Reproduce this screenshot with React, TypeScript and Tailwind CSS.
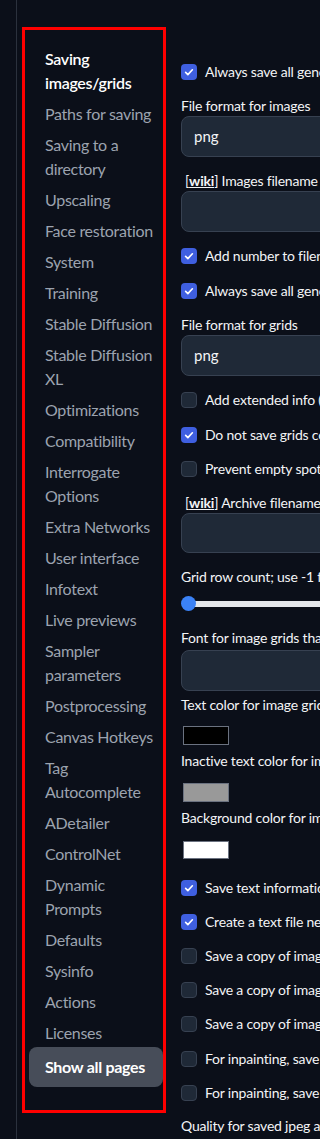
const pages = [
  "Saving images/grids",
  "Paths for saving",
  "Saving to a directory",
  "Upscaling",
  "Face restoration",
  "System",
  "Training",
  "Stable Diffusion",
  "Stable Diffusion XL",
  "Optimizations",
  "Compatibility",
  "Interrogate Options",
  "Extra Networks",
  "User interface",
  "Infotext",
  "Live previews",
  "Sampler parameters",
  "Postprocessing",
  "Canvas Hotkeys",
  "Tag Autocomplete",
  "ADetailer",
  "ControlNet",
  "Dynamic Prompts",
  "Defaults",
  "Sysinfo",
  "Actions",
  "Licenses",
];

function Check({ on, label, className }: { on: boolean; label: string; className: string }) {
  return (
    <div className={`flex h-5 items-center gap-2 whitespace-nowrap ${className}`}>
      {on ? (
        <span className="flex h-4 w-4 shrink-0 items-center justify-center rounded-[4px] bg-[#3f5fe0]">
          <svg viewBox="0 0 16 16" className="h-3 w-3" fill="none">
            <path d="M3.5 8.5l3 3 6-6.5" stroke="white" strokeWidth="2.2" strokeLinecap="round" strokeLinejoin="round" />
          </svg>
        </span>
      ) : (
        <span className="h-4 w-4 shrink-0 rounded-[4px] border border-[#374151] bg-[#1f2937]" />
      )}
      <span className="text-[14px] leading-5 tracking-[-0.2px] text-[#f3f4f6]">{label}</span>
    </div>
  );
}

function Label({ children, className }: { children: React.ReactNode; className: string }) {
  return (
    <div className={`h-5 whitespace-nowrap text-[14px] leading-5 tracking-[-0.2px] text-[#f3f4f6] ${className}`}>
      {children}
    </div>
  );
}

function Wiki({ text }: { text: string }) {
  return (
    <span className="pl-1">
      [<span className="font-bold underline">wiki</span>] {text}
    </span>
  );
}

function Field({ value, h = "h-[41px]", className = "" }: { value?: string; h?: string; className?: string }) {
  return (
    <div
      className={`flex w-[400px] items-center rounded-lg border border-[#374151] bg-[#1f2937] px-3 text-[15px] text-[#f3f4f6] ${h} ${className}`}
    >
      {value}
    </div>
  );
}

export default function App() {
  return (
    <div
      className="flex h-[1139px] w-full items-start overflow-hidden bg-[#0b0f19] pl-4"
      style={{ fontFamily: "Lato, 'Noto Sans', sans-serif" }}
    >
      <div className="flex h-full shrink-0 items-start border-l border-[#2b313d] pl-[5px]">
        <div className="mt-[27px] w-[144px] border-[3px] border-[#ff0000] pb-[23px] pl-1 pt-[13px]">
          <ul>
            {pages.map((p, i) => (
              <li
                key={p}
                className={`py-[3.5px] pl-4 pr-2 text-[16px] leading-6 tracking-[-0.3px] ${
                  i === 0 ? "font-semibold text-white" : "text-[#9ca3af]"
                }`}
              >
                {p}
              </li>
            ))}
          </ul>
          <button className="mt-[-1px] h-10 w-full whitespace-nowrap rounded-lg bg-[#474d59] px-4 text-left text-[16px] font-bold tracking-[-0.3px] text-white">
            Show all pages
          </button>
        </div>
      </div>

      <div className="ml-[15px] min-w-0 flex-1 pt-[62px]">
        <Check on label="Always save all generated images" className="" />
        <Label className="mt-[14px]">File format for images</Label>
        <Field value="png" />
        <Label className="mt-[14px]">
          <Wiki text="Images filename pattern" />
        </Label>
        <Field />
        <Check on label="Add number to filename when saving" className="mt-[14px]" />
        <Check on label="Always save all generated image grids" className="mt-[15px]" />
        <Label className="mt-[14px]">File format for grids</Label>
        <Field value="png" />
        <Check on={false} label="Add extended info (seed, prompt) to filename when saving grid" className="mt-[14px]" />
        <Check on label="Do not save grids consisting of one picture" className="mt-[15px]" />
        <Check on={false} label="Prevent empty spots in grid (when set to autodetect)" className="mt-[14px]" />
        <Label className="mt-[14px]">
          <Wiki text="Archive filename pattern" />
        </Label>
        <Field h="h-[40px]" />
        <Label className="mt-[14px]">Grid row count; use -1 for autodetect and 0 for it to be same as batch size</Label>
        <div className="relative mt-[9px] h-[15px] w-[400px]">
          <div className="absolute left-[4px] right-0 top-[5px] h-[6px] rounded-full bg-[#e5e7eb]" />
          <div className="absolute left-0 top-0 h-[15px] w-[15px] rounded-full bg-[#3b82f6]" />
        </div>
        <Label className="mt-[17px]">Font for image grids that have text</Label>
        <Field className="mt-[2px]" />
        <Label className="mt-[4px]">Text color for image grids</Label>
        <div className="ml-[2px] mt-[11px] h-[19px] w-[46px] border border-[#6b7280] bg-black" />
        <Label className="mt-[6px]">Inactive text color for image grids</Label>
        <div className="ml-[2px] mt-[12px] h-[19px] w-[46px] border border-[#6b7280] bg-[#999999]" />
        <Label className="mt-[6px]">Background color for image grids</Label>
        <div className="ml-[2px] mt-[13px] h-[18px] w-[46px] border border-[#6b7280] bg-white" />
        <Check on label="Save text information about generation parameters as chunks to png files" className="mt-[19px]" />
        <Check on label="Create a text file next to every image with generation parameters." className="mt-[14px]" />
        <Check on={false} label="Save a copy of image before doing face restoration." className="mt-[14px]" />
        <Check on={false} label="Save a copy of image before applying highres fix." className="mt-[14px]" />
        <Check on={false} label="Save a copy of image before applying color correction to img2img results" className="mt-[14px]" />
        <Check on={false} label="For inpainting, save a copy of the greyscale mask" className="mt-[15px]" />
        <Check on={false} label="For inpainting, save a masked composite" className="mt-[14px]" />
        <Label className="mt-[13px]">Quality for saved jpeg and avif images</Label>
      </div>
    </div>
  );
}
